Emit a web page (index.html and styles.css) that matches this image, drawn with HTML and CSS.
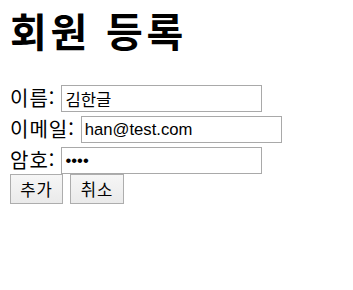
FILE: index.html
```html
<!DOCTYPE html>
<html lang="ko">
<head>
<meta charset="utf-8">
<title>회원 등록</title>
<link rel="stylesheet" href="styles.css">
</head>
<body>
<h1 class="title">회원 등록</h1>
<form class="form">
  <div class="row"><label class="label" for="name">이름:</label><input class="field" id="name" type="text" value="김한글"></div>
  <div class="row"><label class="label" for="email">이메일:</label><input class="field" id="email" type="text" value="han@test.com"></div>
  <div class="row"><label class="label" for="pw">암호:</label><input class="field" id="pw" type="password" value="1234"></div>
  <div class="actions"><button class="btn" type="button">추가</button><button class="btn" type="button">취소</button></div>
</form>
</body>
</html>
```

FILE: styles.css
```css
html, body {
  margin: 0;
  padding: 0;
  background: #fff;
}
body {
  padding: 0 10px;
  font-family: "Noto Sans CJK KR", "Noto Sans", sans-serif;
  color: #000;
}
.title {
  margin: 0;
  padding-top: 6px;
  height: 62px;
  font-size: 40px;
  line-height: 48px;
  font-weight: 700;
  letter-spacing: 3.7px;
}
.form {
  margin: 0;
  padding-top: 15px;
}
.row {
  display: flex;
  align-items: center;
  height: 31px;
}
.label {
  font-size: 20px;
  line-height: 27px;
  margin-right: 6px;
  letter-spacing: 1px;
  position: relative;
  top: -1px;
}
.field {
  box-sizing: border-box;
  width: 201px;
  height: 27px;
  margin: 0;
  padding: 0 3px;
  border: 1px solid #a9a9a9;
  font-family: "Liberation Sans", "Noto Sans CJK KR", sans-serif;
  font-size: 16.67px;
  color: #000;
  background: #fff;
  outline: none;
}
.actions {
  display: flex;
  gap: 7px;
  margin-top: -2px;
}
.btn {
  box-sizing: border-box;
  height: 30px;
  width: 53px;
  margin: 0;
  padding: 0 7px;
  border: 1px solid #adadad;
  background: linear-gradient(#f6f6f6, #eaeaea);
  font-family: "Noto Sans CJK KR", sans-serif;
  font-size: 16.67px;
  line-height: 28px;
  letter-spacing: 1px;
  color: #000;
}
.btn + .btn {
  width: 54px;
}
```
